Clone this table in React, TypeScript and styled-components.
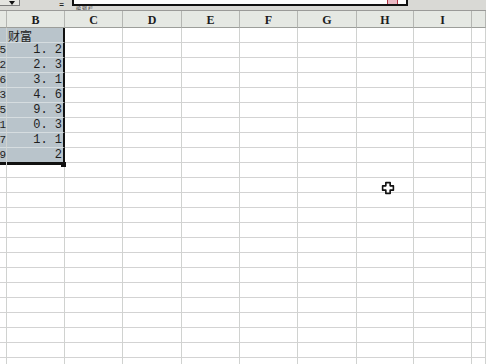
import React from 'react';
import styled, { createGlobalStyle } from 'styled-components';

const GlobalStyle = createGlobalStyle`
  html, body {
    margin: 0;
    padding: 0;
    background: #ffffff;
    overflow: hidden;
  }
`;

const COLS = ['7px', '58px', '58px', '59px', '58px', '58px', '59px', '57px', '58px', '1fr'];
const LETTERS = ['', 'B', 'C', 'D', 'E', 'F', 'G', 'H', 'I', ''];

const Page = styled.div`
  position: relative;
  width: 486px;
  height: 364px;
  overflow: hidden;
  display: flex;
  flex-direction: column;
  font-family: 'Liberation Mono', monospace;
`;

const TopBar = styled.div`
  height: 10px;
  flex: none;
  display: flex;
  background: #d9d9d5;
  overflow: hidden;
`;

const DropDown = styled.div`
  width: 20px;
  height: 6px;
  display: flex;
  justify-content: flex-end;
  align-items: flex-start;
  padding-right: 4px;
  box-sizing: border-box;
  border-right: 1px solid #7d7d7d;
  border-bottom: 1px solid #7d7d7d;
  background: #e4e4e0;
`;

const Arrow = styled.div`
  width: 0;
  height: 0;
  margin-top: 1px;
  border-left: 3px solid transparent;
  border-right: 3px solid transparent;
  border-top: 4px solid #111;
`;

const NamePad = styled.div`
  width: 52px;
  display: flex;
  justify-content: flex-end;
  padding-right: 8px;
  box-sizing: border-box;
  font: bold 8px/9px 'Liberation Sans', sans-serif;
  color: #222;
`;

const FormulaWrap = styled.div`
  width: 336px;
  display: flex;
  flex-direction: column;
`;

const FormulaBox = styled.div`
  height: 4px;
  display: flex;
  justify-content: flex-end;
  padding-right: 8px;
  background: #fdfdfd;
  border-left: 2px solid #111;
  border-right: 2px solid #111;
  border-bottom: 2px solid #111;
`;

const RedIcon = styled.div`
  width: 9px;
  height: 4px;
  background: #e9b9c3;
  border-left: 1px solid #b03040;
  border-right: 1px solid #b03040;
`;

const Hint = styled.div`
  height: 4px;
  padding-left: 4px;
  font: 5px/4px 'Noto Sans CJK SC', sans-serif;
  color: #333;
  letter-spacing: 1px;
`;

const Sheet = styled.div`
  flex: 1;
  display: grid;
  grid-template-columns: ${COLS.join(' ')};
  grid-template-rows: 17px;
  grid-auto-rows: 15px;
  border-top: 1px solid #9a9a98;
`;

const Head = styled.div`
  background: #e5e8e3;
  border-right: 1px solid #b4b6b2;
  border-bottom: 1px solid #9c9e9a;
  box-sizing: border-box;
  display: flex;
  align-items: center;
  justify-content: center;
  font: bold 12px 'Liberation Serif', serif;
  color: #1c1c1c;
  padding-top: 2px;
`;

const Cell = styled.div<{ $sel?: boolean; $right?: boolean; $bottom?: boolean; $align?: string; $narrow?: boolean }>`
  position: relative;
  z-index: ${(p) => (p.$bottom ? 2 : p.$sel ? 1 : 0)};
  box-sizing: border-box;
  min-width: 0;
  background: ${(p) => (p.$sel ? '#b9c4cb' : '#ffffff')};
  border-right: ${(p) => (p.$right ? '2px solid #111' : '1px solid #d0d2d0')};
  border-bottom: 1px solid ${(p) => (p.$sel ? '#d6dde0' : '#d3d3d3')};
  display: flex;
  align-items: center;
  justify-content: ${(p) => p.$align || 'flex-end'};
  padding: ${(p) => (p.$narrow ? '0' : '0 1px')};
  font-size: ${(p) => (p.$narrow ? '11px' : '12px')};
  color: #1e1e1e;
  white-space: nowrap;

  &::after {
    content: '';
    display: ${(p) => (p.$bottom ? 'block' : 'none')};
    position: absolute;
    left: 0;
    right: ${(p) => (p.$right ? '-2px' : '0')};
    bottom: -3px;
    height: 3px;
    background: #111;
  }
`;

const CnText = styled.span`
  font: 12px 'Noto Sans CJK SC', sans-serif;
  color: #222;
`;

const Handle = styled.div`
  position: absolute;
  z-index: 3;
  right: -3px;
  bottom: -5px;
  width: 5px;
  height: 5px;
  background: #111;
`;

const Cursor = styled.svg`
  position: absolute;
  left: 381px;
  top: 181px;
`;

const aValues = ['', '5', '2', '6', '3', '5', '1', '7', '9'];
const bValues = ['财富', '1. 2', '2. 3', '3. 1', '4. 6', '9. 3', '0. 3', '1. 1', '2'];
const ROWS = 23;

const App = () => {
  const rows = Array.from({ length: ROWS }, (_, r) => r);
  return (
    <Page>
      <GlobalStyle />
      <TopBar>
        <DropDown>
          <Arrow />
        </DropDown>
        <NamePad>=</NamePad>
        <FormulaWrap>
          <FormulaBox>
            <RedIcon />
          </FormulaBox>
          <Hint>编辑栏</Hint>
        </FormulaWrap>
      </TopBar>
      <Sheet>
        {LETTERS.map((l, i) => (
          <Head key={`h${i}`}>{l}</Head>
        ))}
        {rows.map((r) =>
          COLS.map((_, c) => {
            const sel = r < 9 && c <= 1;
            const last = r === 8 && c <= 1;
            if (c === 0) {
              return (
                <Cell key={`${r}-${c}`} $narrow $sel={sel} $bottom={last}>
                  {r < 9 ? aValues[r] : ''}
                </Cell>
              );
            }
            if (c === 1 && r < 9) {
              return (
                <Cell key={`${r}-${c}`} $sel $right $bottom={last} $align={r === 0 ? 'flex-start' : 'flex-end'}>
                  {r === 0 ? <CnText>{bValues[r]}</CnText> : bValues[r]}
                  {last && <Handle />}
                </Cell>
              );
            }
            return <Cell key={`${r}-${c}`} />;
          })
        )}
      </Sheet>
      <Cursor width="14" height="14" viewBox="0 0 13 13">
        <path
          d="M4.5 1.5h4v3h3v4h-3v3h-4v-3h-3v-4h3z"
          fill="#ffffff"
          stroke="#111"
          strokeWidth="1.5"
          strokeLinejoin="round"
        />
      </Cursor>
    </Page>
  );
};

export default App;
